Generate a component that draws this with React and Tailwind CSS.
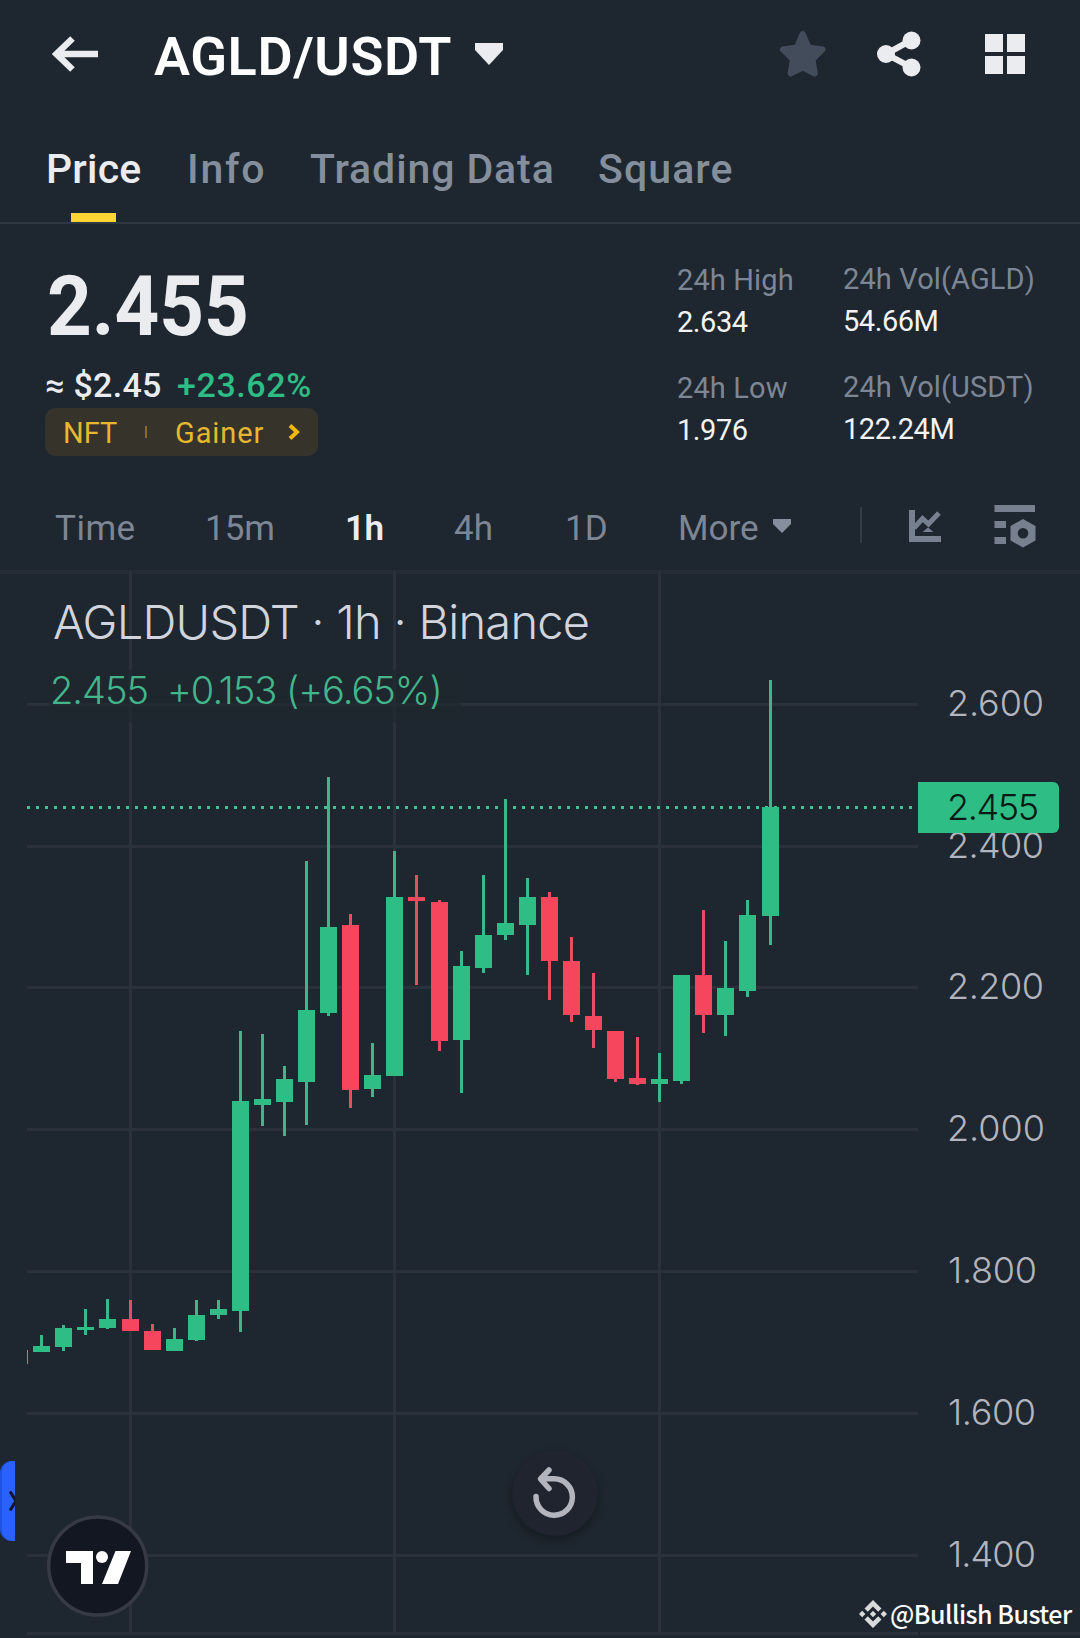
import React from "react";

const GREEN = "#2ebd85";
const RED = "#f6465d";

// Each candle: left edge, body top, body bottom, wick top, wick bottom, rising
const CANDLES = [
  [33, 1346, 1352, 1335, 1352, 1],
  [55, 1328, 1347, 1325, 1351, 1],
  [77, 1327, 1330, 1309, 1335, 1],
  [99, 1319, 1328, 1299, 1329, 1],
  [122, 1319, 1331, 1300, 1331, 0],
  [144, 1331, 1350, 1324, 1350, 0],
  [166, 1339, 1351, 1328, 1351, 1],
  [188, 1315, 1340, 1300, 1341, 1],
  [210, 1309, 1315, 1300, 1319, 1],
  [232, 1101, 1311, 1031, 1332, 1],
  [254, 1099, 1105, 1034, 1126, 1],
  [276, 1079, 1102, 1066, 1136, 1],
  [298, 1010, 1082, 861, 1125, 1],
  [320, 927, 1013, 777, 1016, 1],
  [342, 925, 1090, 914, 1108, 0],
  [364, 1075, 1089, 1043, 1097, 1],
  [386, 897, 1076, 851, 1076, 1],
  [408, 897, 901, 875, 985, 0],
  [431, 902, 1041, 900, 1051, 0],
  [453, 966, 1040, 951, 1093, 1],
  [475, 935, 968, 875, 973, 1],
  [497, 923, 935, 799, 940, 1],
  [519, 897, 925, 878, 975, 1],
  [541, 897, 961, 892, 1000, 0],
  [563, 961, 1015, 937, 1022, 0],
  [585, 1016, 1030, 973, 1048, 0],
  [607, 1031, 1079, 1031, 1082, 0],
  [629, 1078, 1084, 1037, 1085, 0],
  [651, 1079, 1084, 1053, 1102, 1],
  [673, 975, 1081, 975, 1084, 1],
  [695, 975, 1015, 910, 1033, 0],
  [717, 988, 1015, 941, 1036, 1],
  [739, 915, 991, 900, 997, 1],
  [762, 807, 916, 680, 945, 1],
];

// Each level: label, grid line y, label x, label width
const LEVELS = [
  ["2.600", 704.5, 949, 95],
  ["2.400", 846.5, 949, 95],
  ["2.200", 987.5, 949, 95],
  ["2.000", 1129.5, 949, 96],
  ["1.800", 1271.5, 950, 87],
  ["1.600", 1413, 950, 86],
  ["1.400", 1555.5, 950, 86],
];

function Header() {
  return (
    <header className="flex h-[108px] items-center pl-[52px] pr-[55px]">
      <svg className="h-[38px] w-[46px] shrink-0" viewBox="52 35 46 38" fill="none" stroke="#eaecef" strokeWidth="6.500">
        <path d="M98 54H57M72.500 38.500L56.500 54L72.500 69.500" />
      </svg>
      <h1 className="ml-[56px] mt-[5px] w-[312px] whitespace-nowrap text-[54px] font-semibold leading-none tracking-[0.6px] text-white">
        AGLD/USDT
      </h1>
      <svg className="ml-[9px] h-[22px] w-[28px] shrink-0" viewBox="0 0 28 22" fill="#eaecef">
        <path d="M0 0H28V7L14 22L0 7Z" />
      </svg>
      <div className="ml-auto flex items-center gap-[51px]">
        <svg className="h-[48px] w-[47px]" viewBox="779 31 47 48" fill="#434c5a" stroke="#434c5a" strokeWidth="6" strokeLinejoin="round">
          <path d="M802.700 35L808.500 48.500L822.500 50.500L812.500 60.500L814.800 74.500L802.700 68.500L790.600 74.500L792.900 60.500L782.900 50.500L796.900 48.500Z" />
        </svg>
        <svg className="h-[48px] w-[44px]" viewBox="877 30 44 48" fill="#eaecef">
          <path d="M911.500 40L886 54L911.500 67.500" fill="none" stroke="#eaecef" strokeWidth="6" />
          <circle cx="886" cy="54" r="9" />
          <circle cx="911.500" cy="40.500" r="9" />
          <circle cx="911.500" cy="67.500" r="9" />
        </svg>
        <div className="ml-[13px] grid h-[40px] w-[40px] grid-cols-2 gap-[4px]">
          <span className="bg-[#eaecef]" />
          <span className="bg-[#eaecef]" />
          <span className="bg-[#eaecef]" />
          <span className="bg-[#eaecef]" />
        </div>
      </div>
    </header>
  );
}

function Tabs() {
  return (
    <nav className="flex h-[116px] border-b-2 border-[#2f3743] pl-[46px] text-[41px] font-medium leading-[123px] text-[#848e9c]">
      <div className="flex w-[141px] flex-col">
        <span className="h-[105px] tracking-[0.2px] text-[#eaecef]">Price</span>
        <span className="ml-[25px] h-[9px] w-[45px] bg-[#fcd535]" />
      </div>
      <span className="w-[123px] tracking-[1.8px]">Info</span>
      <span className="w-[288px] whitespace-nowrap tracking-[0.9px]">Trading Data</span>
      <span className="tracking-[1.1px]">Square</span>
    </nav>
  );
}

function Stat({ label, value }) {
  return (
    <div className="flex h-[108px] flex-col whitespace-nowrap text-[29px] leading-[42px]">
      <span className="tracking-[0.12px] text-[#7d8695]">{label}</span>
      <span className="tracking-[-0.45px] text-[#f2f3f5]">{value}</span>
    </div>
  );
}

function Ticker() {
  return (
    <section className="flex h-[251px] justify-between">
      <div className="pl-[45px] pt-[41px]">
        <div className="ml-[1.5px] h-[81px] origin-left scale-x-[0.93] whitespace-nowrap text-[84px] font-bold leading-[84px] text-[#eaecef]">
          2.455
        </div>
        <div className="flex h-[62px] items-center whitespace-nowrap pt-[16px] text-[34px] font-medium leading-none">
          <span className="w-[132px] tracking-[0.3px] text-[#eaecef]">≈ $2.45</span>
          <span className="tracking-[0.6px] text-[#2ebd85]">+23.62%</span>
        </div>
        <div className="flex h-[48px] w-[273px] items-center rounded-[10px] bg-[#35332a] text-[29px] text-[#e6b830]">
          <span className="ml-[18px] w-[82px] pt-[3px]">NFT</span>
          <span className="h-3 w-[2px] bg-[#8a6d22]" />
          <span className="ml-[28px] w-[113px] pt-[3px] tracking-[0.9px]">Gainer</span>
          <svg className="h-4 w-3" viewBox="0 0 12 16" fill="none" stroke="#f0b90b" strokeWidth="4">
            <path d="M2 1.500L9 8L2 14.500" />
          </svg>
        </div>
      </div>
      <div className="grid w-[403px] grid-cols-[166px_auto] pt-[35px]">
        <div>
          <Stat label="24h High" value="2.634" />
          <Stat label="24h Low" value="1.976" />
        </div>
        <div className="-mt-px">
          <Stat label="24h Vol(AGLD)" value="54.66M" />
          <Stat label="24h Vol(USDT)" value="122.24M" />
        </div>
      </div>
    </section>
  );
}

function Intervals() {
  return (
    <nav className="flex h-[95px] items-center whitespace-nowrap pl-[55px] pt-[13px] text-[35px] leading-[70px] text-[#7d8695]">
      <span className="w-[150px] tracking-[0.5px]">Time</span>
      <span className="w-[140px]">15m</span>
      <span className="w-[109px] font-semibold tracking-[-0.5px] text-[#eaecef]">1h</span>
      <span className="w-[111px]">4h</span>
      <span className="w-[113px]">1D</span>
      <span className="w-[95px]">More</span>
      <svg className="-mt-[7px] h-[14px] w-[18px]" viewBox="0 0 18 14" fill="#848e9c">
        <path d="M0 0H18V5L9 14L0 5Z" />
      </svg>
      <span className="-mt-[8px] ml-[69px] h-[36px] w-[2px] bg-[#333b47]" />
      <svg className="-mt-[7px] ml-[47px] h-[32px] w-[32px]" viewBox="0 0 32 32" fill="#76808f">
        <path d="M0 0H6V26H32V32H0Z" />
        <path d="M5 18L13.500 8.500L19.500 14L30 3" fill="none" stroke="#76808f" strokeWidth="5" />
        <path d="M19 17.500L24.500 22H13.500Z" />
      </svg>
      <svg className="-mt-[5px] ml-[53px] h-[43px] w-[42px]" viewBox="0 0 42 43" fill="#76808f">
        <path d="M0.500 0H41V7H0.500ZM0.500 16H12V23H0.500ZM0.500 32H12V39H0.500Z" />
        <path fillRule="evenodd" d="M29 14L41.500 21V35.500L29 42.500L16.500 35.500V21ZM29 23A5.300 5.300 0 1 0 29 33.600A5.300 5.300 0 1 0 29 23Z" />
      </svg>
    </nav>
  );
}

function CandleChart() {
  return (
    <svg className="block h-[1068px] w-[1080px]" viewBox="0 570 1080 1068" shapeRendering="crispEdges">
      <rect x="0" y="570" width="1080" height="4" fill="#252c36" />
      <g fill="#2a313b">
        {[129, 393, 658].map((x) => (
          <rect key={x} x={x} y="570" width="3" height="1062" />
        ))}
        {LEVELS.map(([label, y]) => (
          <rect key={label} x="27" y={Math.round(y - 1.5)} width="891" height="3" />
        ))}
        <rect x="27" y="1632" width="891" height="3" />
        <rect x="920" y="1632" width="160" height="3" />
      </g>
      <rect x="49" y="670" width="412" height="52" fill="#1e262f" opacity="0.6" />
      <path d="M27 807.500H915" stroke="#45c095" strokeWidth="3" strokeDasharray="3 6" />
      <rect x="27" y="1350" width="1" height="14" fill={GREEN} />
      {CANDLES.map(([x, top, bottom, high, low, up]) => (
        <g key={x}>
          <rect x={x + 7} y={high} width="3" height={low - high} fill={up ? "#3ab889" : "#e84e63"} />
          <rect x={x} y={top} width="17" height={bottom - top} fill={up ? GREEN : RED} />
        </g>
      ))}
      <g fontFamily="Inter, sans-serif" fontWeight="300" fontSize="36">
        {LEVELS.map(([label, y, x, w]) => (
          <text key={label} x={x - 2} y={y + 11.5} fill="#b2b5be" textLength={w + 2}>
            {label}
          </text>
        ))}
        <path d="M918 782H1053A6 6 0 0 1 1059 788V827A6 6 0 0 1 1053 833H918Z" fill={GREEN} shapeRendering="auto" />
        <text x="947" y="820" fill="#0b1a14" textLength="92">2.455</text>
      </g>
    </svg>
  );
}

function TradingViewBadge() {
  return (
    <svg className="absolute left-[46px] top-[944px] h-[104px] w-[104px]" viewBox="46 1514 104 104">
      <circle cx="97.700" cy="1566" r="49" fill="#131722" stroke="#363a45" strokeWidth="3.500" />
      <path d="M66 1551H93V1584H81V1563H66ZM115.500 1551H131L118 1584H102Z" fill="#fff" />
      <circle cx="102" cy="1557" r="6" fill="#fff" />
    </svg>
  );
}

function ResetButton() {
  return (
    <button className="absolute left-[512px] top-[880px] flex h-[86px] w-[86px] items-center justify-center rounded-full bg-[#1f242e] shadow-[0_4px_8px_rgba(0,0,0,0.3)]">
      <svg className="h-[86px] w-[86px]" viewBox="0 0 86 86" fill="none" stroke="#b2b5be" strokeWidth="5.500" strokeLinecap="round" strokeLinejoin="round">
        <path d="M24 46.500A18.200 18.200 0 1 0 42.200 28.800H29M37 20L28.500 29L37 38.500" />
      </svg>
    </button>
  );
}

function Watermark() {
  return (
    <div className="absolute left-[859px] top-[1025px] flex h-[36px] items-center whitespace-nowrap">
      <svg className="mt-px h-[28px] w-[28px]" viewBox="0 0 28 28" fill="#d9dadc">
        <path d="M14 0L22.500 8.500L19.200 11.800L14 6.600L8.800 11.800L5.500 8.500Z" />
        <path d="M14 28L5.500 19.500L8.800 16.200L14 21.400L19.200 16.200L22.500 19.500Z" />
        <path d="M14 10.800L17.200 14L14 17.200L10.800 14ZM3.200 10.800L6.400 14L3.200 17.200L0 14ZM24.800 10.800L28 14L24.800 17.200L21.600 14Z" />
      </svg>
      <span className="ml-[3px] font-['Noto_Sans_CJK_SC',sans-serif] text-[25px] font-medium leading-[36px] tracking-[-0.5px] text-white">
        @Bullish Buster
      </span>
    </div>
  );
}

export default function App() {
  return (
    <main className="h-[1638px] w-[1080px] overflow-hidden bg-[#1e262f] font-[Roboto,sans-serif]">
      <Header />
      <Tabs />
      <Ticker />
      <Intervals />
      <section className="relative h-[1068px]">
        <CandleChart />
        <div className="absolute left-[53px] top-[22px] whitespace-nowrap font-[Inter,sans-serif] text-[47px] font-light leading-[60px] tracking-[-0.75px] text-[#d1d4dc]">
          AGLDUSDT · 1h · Binance
        </div>
        <div className="absolute left-[50px] top-[96px] flex gap-[19px] whitespace-nowrap font-[Inter,sans-serif] text-[38px] font-light leading-[48px] tracking-[-1px] text-[#42b58b]">
          <span>2.455</span>
          <span>+0.153 (+6.65%)</span>
        </div>
        <div className="absolute left-0 top-[891px] h-[80px] w-[15px] overflow-hidden rounded-l-[12px] border-l-2 border-[#1e53e5] bg-[#2962ff]">
          <svg className="absolute left-[7px] top-[30px] h-[20px] w-[10px]" viewBox="0 0 10 20" fill="none" stroke="#131722" strokeWidth="3">
            <path d="M1 0.500L7 10L1 19.500" />
          </svg>
        </div>
        <ResetButton />
        <TradingViewBadge />
        <Watermark />
      </section>
    </main>
  );
}
